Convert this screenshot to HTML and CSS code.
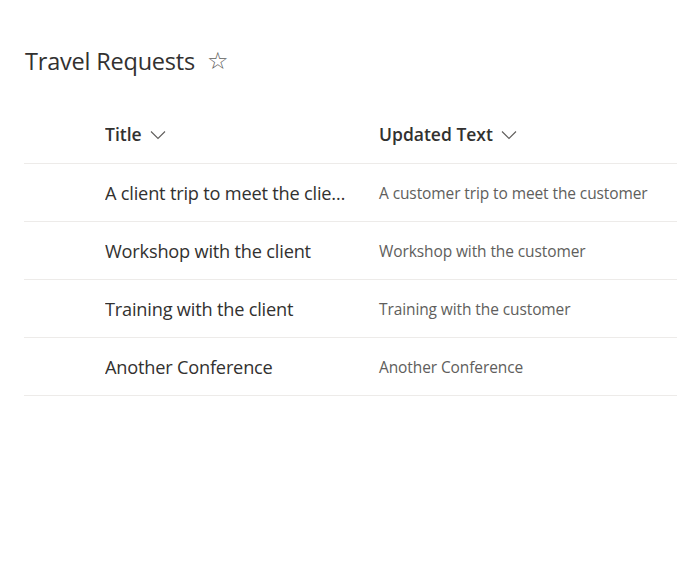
FILE: index.html
```html
<!DOCTYPE html>
<html>
<head>
<meta charset="utf-8">
<link rel="stylesheet" href="styles.css">
</head>
<body>
<div class="page">
  <div class="list-header">
    <h1 class="list-title">Travel Requests</h1>
    <span class="star">☆</span>
  </div>
  <div class="grid">
    <div class="row head">
      <div class="cell spacer"></div>
      <div class="cell col1 hcell">Title <svg class="chev" width="16" height="10" viewBox="0 0 16 10"><path d="M1 1.5 L8 8.5 L15 1.5" fill="none" stroke="#605e5c" stroke-width="1.1"/></svg></div>
      <div class="cell col2 hcell">Updated Text <svg class="chev" width="16" height="10" viewBox="0 0 16 10"><path d="M1 1.5 L8 8.5 L15 1.5" fill="none" stroke="#605e5c" stroke-width="1.1"/></svg></div>
    </div>
    <div class="row">
      <div class="cell spacer"></div>
      <div class="cell col1 t1">A client trip to meet the clie…</div>
      <div class="cell col2 t2">A customer trip to meet the customer</div>
    </div>
    <div class="row">
      <div class="cell spacer"></div>
      <div class="cell col1 t1">Workshop with the client</div>
      <div class="cell col2 t2">Workshop with the customer</div>
    </div>
    <div class="row">
      <div class="cell spacer"></div>
      <div class="cell col1 t1">Training with the client</div>
      <div class="cell col2 t2">Training with the customer</div>
    </div>
    <div class="row">
      <div class="cell spacer"></div>
      <div class="cell col1 t1">Another Conference</div>
      <div class="cell col2 t2">Another Conference</div>
    </div>
  </div>
</div>
</body>
</html>
```
FILE: styles.css
```css
html, body {
  margin: 0;
  padding: 0;
  background: #ffffff;
}
body {
  font-family: "Open Sans", "Noto Sans", sans-serif;
  color: #323130;
}
.page {
  padding: 44px 0 0 24px;
}
.list-header {
  display: flex;
  align-items: center;
  height: 34px;
  padding-left: 1px;
}
.list-title {
  margin: 0;
  font-size: 23.5px;
  font-weight: 400;
  color: #323130;
  letter-spacing: -0.2px;
}
.star {
  margin-left: 12px;
  font-size: 24px;
  line-height: 1;
  color: #605e5c;
  font-family: "DejaVu Sans", sans-serif;
}
.grid {
  margin-top: 37px;
}
.row {
  display: flex;
  align-items: center;
  height: 57px;
  border-bottom: 1px solid #edebe9;
}
.row.head {
  height: 38px;
  padding-bottom: 10px;
}
.spacer {
  width: 81px;
  flex: none;
}
.col1 {
  width: 248px;
  flex: none;
  padding-right: 26px;
  white-space: nowrap;
  overflow: hidden;
}
.col2 {
  flex: 1;
  white-space: nowrap;
}
.hcell {
  font-size: 17.5px;
  font-weight: 600;
  color: #323130;
  display: flex;
  align-items: center;
  gap: 8px;
}
.chev {
  margin-top: 1px;
}
.t1 {
  font-size: 18.2px;
  color: #323130;
  letter-spacing: -0.2px;
}
.t2 {
  font-size: 15.5px;
  color: #605e5c;
  letter-spacing: -0.1px;
}
```
